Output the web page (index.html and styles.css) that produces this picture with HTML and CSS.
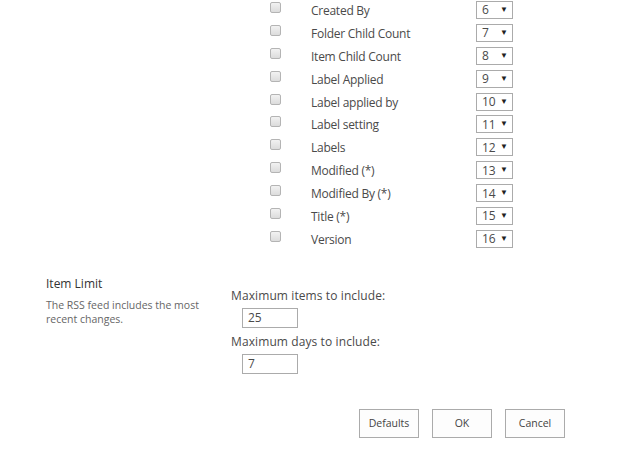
FILE: index.html
```html
<!DOCTYPE html>
<html>
<head>
<meta charset="utf-8">
<link rel="stylesheet" href="styles.css">
</head>
<body>
<div class="page">
  <div class="columns">
    <div class="col-left"></div>
    <div class="col-right">
      <div class="rows">
        <div class="row"><span class="cb"></span><span class="lbl">Created By</span><span class="sel"><span class="num">6</span><span class="arr">▼</span></span></div>
        <div class="row"><span class="cb"></span><span class="lbl">Folder Child Count</span><span class="sel"><span class="num">7</span><span class="arr">▼</span></span></div>
        <div class="row"><span class="cb"></span><span class="lbl">Item Child Count</span><span class="sel"><span class="num">8</span><span class="arr">▼</span></span></div>
        <div class="row"><span class="cb"></span><span class="lbl">Label Applied</span><span class="sel"><span class="num">9</span><span class="arr">▼</span></span></div>
        <div class="row"><span class="cb"></span><span class="lbl">Label applied by</span><span class="sel"><span class="num">10</span><span class="arr">▼</span></span></div>
        <div class="row"><span class="cb"></span><span class="lbl">Label setting</span><span class="sel"><span class="num">11</span><span class="arr">▼</span></span></div>
        <div class="row"><span class="cb"></span><span class="lbl">Labels</span><span class="sel"><span class="num">12</span><span class="arr">▼</span></span></div>
        <div class="row"><span class="cb"></span><span class="lbl">Modified (*)</span><span class="sel"><span class="num">13</span><span class="arr">▼</span></span></div>
        <div class="row"><span class="cb"></span><span class="lbl">Modified By (*)</span><span class="sel"><span class="num">14</span><span class="arr">▼</span></span></div>
        <div class="row"><span class="cb"></span><span class="lbl">Title (*)</span><span class="sel"><span class="num">15</span><span class="arr">▼</span></span></div>
        <div class="row"><span class="cb"></span><span class="lbl">Version</span><span class="sel"><span class="num">16</span><span class="arr">▼</span></span></div>
      </div>
    </div>
  </div>
  <div class="columns limit">
    <div class="col-left">
      <div class="heading">Item Limit</div>
      <div class="desc">The RSS feed includes the most recent changes.</div>
    </div>
    <div class="col-right form">
      <div class="flabel">Maximum items to include:</div>
      <div class="input">25</div>
      <div class="flabel">Maximum days to include:</div>
      <div class="input">7</div>
    </div>
  </div>
  <div class="buttons">
    <button class="btn">Defaults</button>
    <button class="btn">OK</button>
    <button class="btn">Cancel</button>
  </div>
</div>
</body>
</html>
```
FILE: styles.css
```css
* { box-sizing: border-box; }
html, body { margin: 0; padding: 0; background: #fff; }
body {
  font-family: "Open Sans", "Noto Sans", sans-serif;
  color: #4a4a4a;
  font-size: 12px;
  width: 624px;
  height: 452px;
  overflow: hidden;
}
.columns { display: flex; }
.col-left { width: 231px; flex: none; }
.col-right { flex: 1; }
.rows { margin-top: -1px; padding-left: 39px; }
.row {
  display: flex;
  align-items: center;
  height: 22.9px;
}
.cb {
  width: 11px;
  height: 11px;
  border: 1px solid #b4b4b4;
  border-radius: 2px;
  background: linear-gradient(#f2f2f2, #dcdcdc);
  flex: none;
  margin-top: -6px;
}
.lbl {
  margin-left: 30px;
  width: 165px;
  font-size: 12px;
  letter-spacing: -0.25px;
  color: #4a4a4a;
}
.sel {
  display: flex;
  align-items: center;
  justify-content: space-between;
  width: 37px;
  height: 18px;
  margin-top: -1px;
  border: 1px solid #ababab;
  padding: 0 4px 0 5px;
  font-size: 12px;
  color: #4a4a4a;
}
.arr { font-size: 8px; color: #222; margin-top: -3px; }
.limit { margin-top: 25px; }
.limit .col-left { padding-left: 46px; padding-top: 0; }
.heading { font-size: 12px; color: #333; line-height: 16px; }
.desc {
  font-size: 10.5px;
  color: #666;
  line-height: 14.5px;
  margin-top: 6px;
  width: 160px;
}
.form { padding-top: 12px; }
.flabel { font-size: 12px; letter-spacing: 0.1px; color: #4a4a4a; line-height: 16px; }
.input {
  margin: 4px 0 6px 11px;
  width: 56px;
  height: 20px;
  border: 1px solid #ababab;
  padding: 0 0 0 5px;
  font-size: 12px;
  line-height: 18px;
  color: #4a4a4a;
}
.buttons {
  display: flex;
  gap: 13px;
  padding-left: 359px;
  margin-top: 29px;
}
.btn {
  width: 60px;
  height: 29px;
  border: 1px solid #ababab;
  background: #fdfdfd;
  font-family: "Open Sans", "Noto Sans", sans-serif;
  font-size: 10.5px;
  color: #444;
  padding: 0;
}
```
